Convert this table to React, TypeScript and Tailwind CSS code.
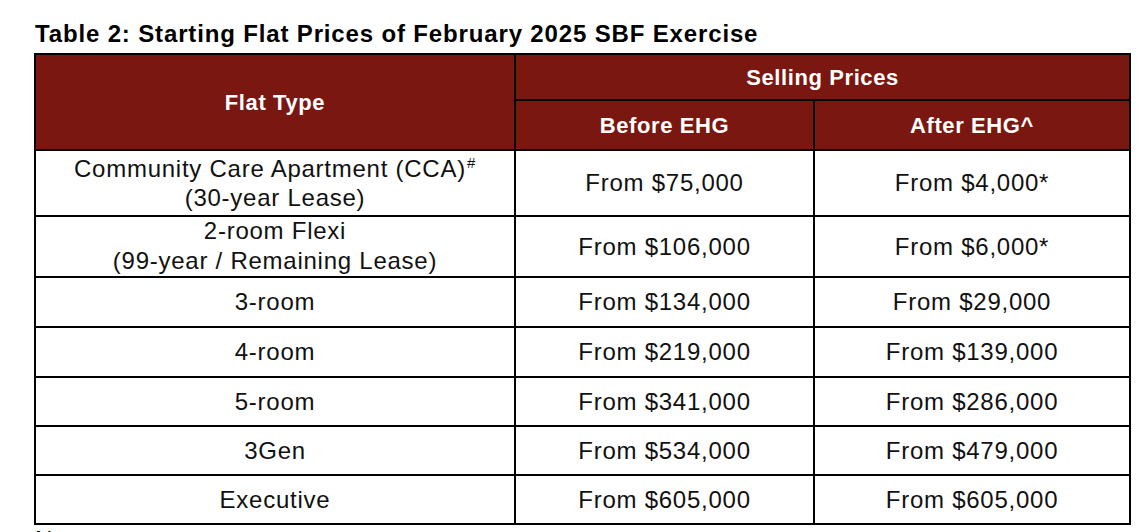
import * as React from "react";

type Row = {
  type: React.ReactNode;
  before: string;
  after: string;
  h: number;
};

const rows: Row[] = [
  {
    type: (
      <div className="leading-[26px] pt-[1px]">
        <div>
          Community Care Apartment (CCA)
          <span className="text-[15px] relative -top-[9px] ml-[1px]">#</span>
        </div>
        <div>(30-year Lease)</div>
      </div>
    ),
    before: "From $75,000",
    after: "From $4,000*",
    h: 66,
  },
  {
    type: (
      <div className="leading-[30px] -mt-[2px]">
        <div>2-room Flexi</div>
        <div>(99-year / Remaining Lease)</div>
      </div>
    ),
    before: "From $106,000",
    after: "From $6,000*",
    h: 61,
  },
  { type: "3-room", before: "From $134,000", after: "From $29,000", h: 50 },
  { type: "4-room", before: "From $219,000", after: "From $139,000", h: 50 },
  { type: "5-room", before: "From $341,000", after: "From $286,000", h: 49 },
  { type: "3Gen", before: "From $534,000", after: "From $479,000", h: 49 },
  { type: "Executive", before: "From $605,000", after: "From $605,000", h: 49 },
];

export default function App() {
  return (
    <div
      className="w-[1144px] h-[532px] overflow-hidden bg-white text-black"
      style={{ fontFamily: '"Liberation Sans", Arial, sans-serif' }}
    >
      <div className="pl-[35px] pt-[19px] text-[24px] font-bold leading-[30px] tracking-[0.85px]">
        Table 2: Starting Flat Prices of February 2025 SBF Exercise
      </div>
      <table className="ml-[34px] mt-[4px] w-[1095px] border-collapse border-2 border-black table-fixed">
        <colgroup>
          <col className="w-[480px]" />
          <col className="w-[299px]" />
          <col className="w-[316px]" />
        </colgroup>
        <thead className="bg-[#7b1711] text-white text-[22px] font-bold tracking-[0.6px]">
          <tr className="h-[46px]">
            <th rowSpan={2} className="border-2 border-black font-bold align-middle">
              Flat Type
            </th>
            <th colSpan={2} className="border-2 border-black font-bold">
              Selling Prices
            </th>
          </tr>
          <tr className="h-[50px]">
            <th className="border-2 border-black font-bold">Before EHG</th>
            <th className="border-2 border-black font-bold">After EHG^</th>
          </tr>
        </thead>
        <tbody className="text-[24px] text-[#111] tracking-[0.75px] text-center">
          {rows.map((r, i) => (
            <tr key={i} style={{ height: r.h }}>
              <td className="border-2 border-black p-0 align-middle">{r.type}</td>
              <td className="border-2 border-black p-0">{r.before}</td>
              <td className="border-2 border-black p-0">{r.after}</td>
            </tr>
          ))}
        </tbody>
      </table>
      <div className="pl-[35px] pt-[1px] text-[24px] leading-[28px]">Notes:</div>
    </div>
  );
}
